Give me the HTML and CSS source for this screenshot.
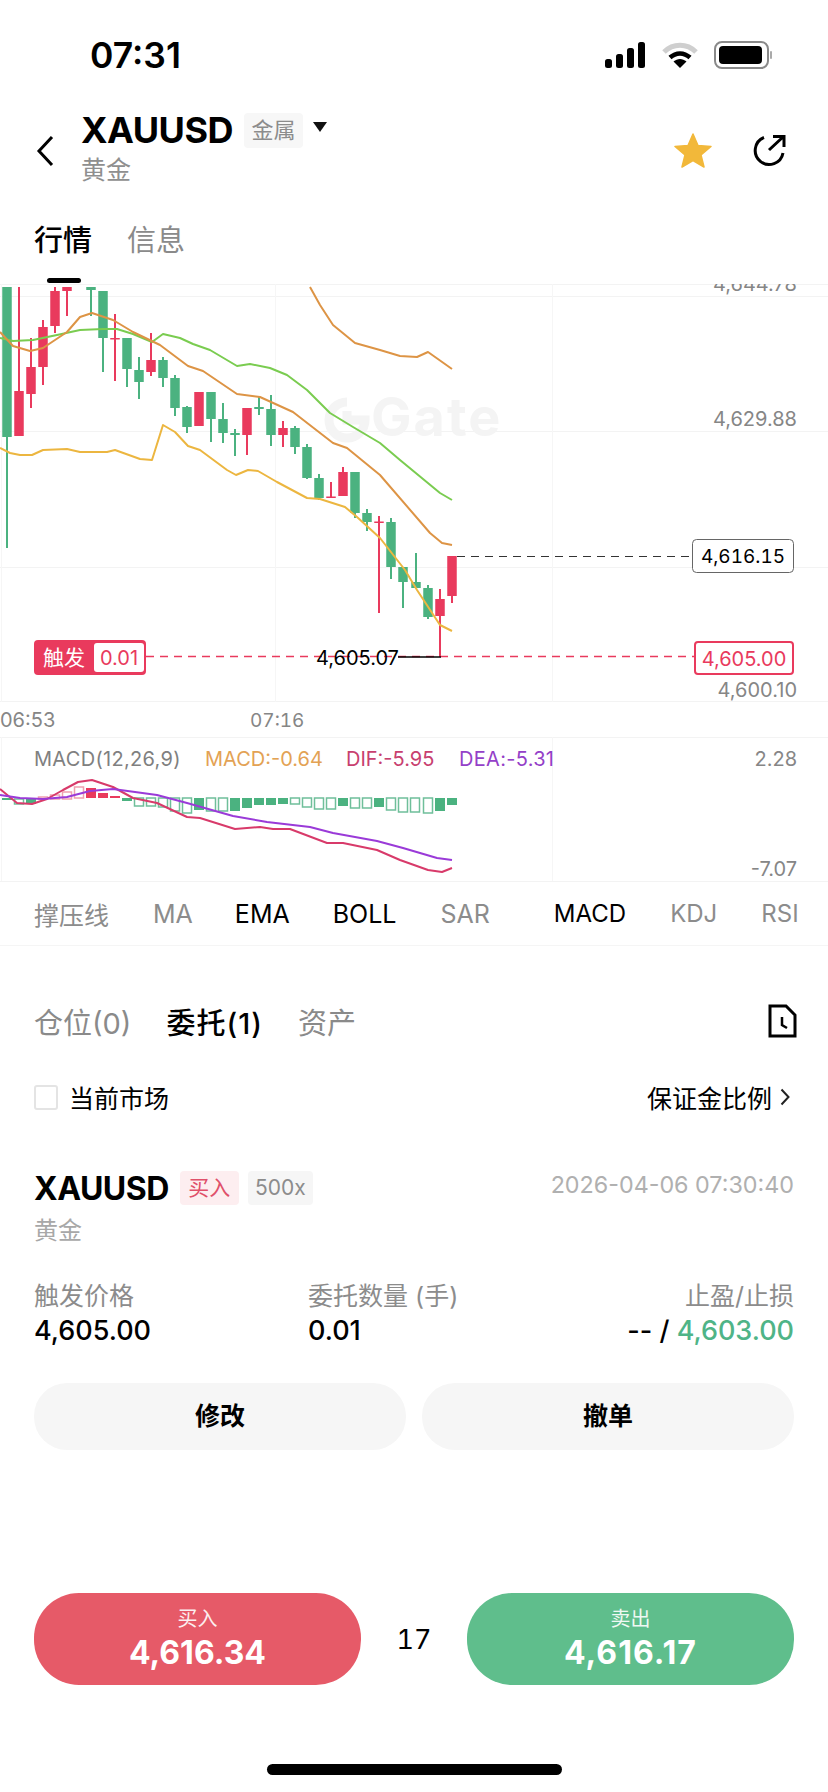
FILE: index.html
```html
<!DOCTYPE html>
<html lang="zh-CN">
<head>
  <meta charset="UTF-8">
  <title>XAUUSD</title>
  <link rel="stylesheet" href="styles.css">
</head>
<body>
  <div class="phone">
    <div class="status">
      <span class="time">07:31</span>
      <div class="status-icons">
        <svg width="41" height="26" viewBox="0 0 41 26"><rect x="0" y="17" width="7" height="9" rx="2.5"/><rect x="11" y="12" width="7" height="14" rx="2.5"/><rect x="22" y="6" width="7" height="20" rx="2.5"/><rect x="33" y="0" width="7" height="26" rx="2.5"/></svg>
        <svg width="36" height="26" viewBox="0 0 36 26"><path d="M2 10C11 1 25 1 34 10" fill="none" stroke="#cfcfcf" stroke-width="5"/><path d="M8 15.5C14 10 22 10 28 15.5" fill="none" stroke="#000" stroke-width="4.5"/><path d="M11.5 19.5C15.5 16 20.500 16 24.500 19.500L18 26Z"/></svg>
        <svg width="59" height="28" viewBox="0 0 59 28"><rect x="1" y="1" width="53" height="26" rx="7" fill="none" stroke="#8a8a8a" stroke-width="2"/><rect x="5" y="5" width="43" height="18" rx="4"/><rect x="56" y="10" width="2" height="8" rx="1" fill="#aaa"/></svg>
      </div>
    </div>

    <div class="top">
      <svg class="back" width="18" height="32" viewBox="0 0 18 32"><path d="M16 2L3 16L16 30" fill="none" stroke="#000" stroke-width="3"/></svg>
      <div class="title">
        <div class="title-row">
          <span class="symbol">XAUUSD</span>
          <span class="kind">金属</span>
          <span class="caret"></span>
        </div>
        <div class="sub">黄金</div>
      </div>
      <div class="top-icons">
        <svg width="38" height="35" viewBox="0 0 38 35"><path d="M19 1L24 12.500L37 13.500L27 22L30 34L19 27.500L8 34L11 22L1 13.500L14 12.500Z" fill="#f2b83a" stroke="#f2b83a" stroke-width="1.500" stroke-linejoin="round"/></svg>
        <svg width="33" height="33" viewBox="0 0 33 33"><path d="M11 3.500A14 14 0 1 0 30 19" fill="none" stroke="#000" stroke-width="3"/><path d="M16 16L30 3M20 2.500H31V13" fill="none" stroke="#000" stroke-width="3"/></svg>
      </div>
    </div>

    <div class="tabs">
      <span class="tab on">行情</span>
      <span class="tab">信息</span>
      <span class="tab-mark"></span>
    </div>

    <svg class="chart" width="828" height="598" viewBox="0 284 828 598">
      <!-- grid -->
      <path d="M0 284.500H828M0 296.500H828M0 431.500H828M0 567.500H828M0 701.500H828M0 737.500H828M0 881.500H828" stroke="#f3f3f3" fill="none"/>
      <path d="M275.500 284V702M552.500 284V702M552.500 737V881M1.500 284V702M1.500 737V881" stroke="#f6f6f6" fill="none"/>

      <!-- watermark -->
      <g class="mark">
        <path d="M347 402A18 18 0 1 0 365 420H347V411" fill="none" stroke="#f4f4f4" stroke-width="9"/>
        <text x="371" y="436">Gate</text>
      </g>

      <!-- candle wicks -->
      <path stroke="#4bb280" stroke-width="2" fill="none" d="M7 287V548M91 287V316M103 338V372M127 369V387M139 357V399M163 357V387M175 375V416M187 406V433M211 419V442M223 403V443M235 429V456M259 397V415M271 395V446M295 426V454M307 444V479M319 474V500M355 513V518M367 509V531M391 518V579M403 582V608M416 553V588M428 585V619"/>
      <path stroke="#e93a5d" stroke-width="2" fill="none" d="M19 287V391M31 338V408M43 320V385M55 287V333M67 287V316M115 314V381M151 333V376M247 435V455M283 421V447M331 482V498M343 467V496M379 516V613M440 589V657M452 596V603"/>
      <!-- candle bodies -->
      <path stroke="#4bb280" stroke-width="9.500" fill="none" d="M7 287V437M91 287V290M103 291V338M127 338V369M139 370V382M163 360V378M175 378V408M187 407V427M211 392V419M223 419V433M235 433V435M259 407V409M271 409V435M295 428V447M307 447V478M319 478V498M355 472V513M367 513V522M391 522V567M403 567V582M416 582V588M428 588V617"/>
      <path stroke="#e93a5d" stroke-width="9.500" fill="none" d="M19 391V436M31 367V394M43 327V367M55 291V326M67 287V291M115 338V339.500M151 360V372M199 392V426M247 408V435M283 428V435M331 496.500V498M343 472V496M379 521.500V523M440 599V616M452 556V596"/>

      <!-- boll lines -->
      <polyline class="ln" stroke="#dd9445" points="310,287 320,305 333,325 355,343 380,350 400,356 417,357 428,352 452,369"/>
      <polyline class="ln" stroke="#7acc50" points="0,338 13,341 33,340 57,335 80,330 103,329 117,329 133,334 152,342 163,334 180,338 193,344 210,350 237,366 250,364 270,368 287,375 307,390 330,413 353,427 380,443 400,460 440,493 452,500"/>
      <polyline class="ln" stroke="#dd9445" points="0,332 13,346 30,351 43,348 67,332 80,317 92,313 113,320 133,332 160,345 188,366 203,371 237,394 260,397 293,412 333,443 347,448 380,475 430,533 442,543 452,545"/>
      <polyline class="ln" stroke="#ecb640" points="0,448 10,453 20,455 32,455 43,450 67,449 80,452 107,452 115,450 140,459 152,460 163,425 175,432 188,446 200,450 227,470 236,475 248,470 258,471 277,482 307,498 320,499 345,507 357,517 380,538 405,570 417,590 440,625 452,631"/>

      <!-- current price -->
      <path d="M457 556.500H692" stroke="#333" stroke-dasharray="8 6" fill="none"/>
      <rect class="tag" x="692.500" y="539.500" width="101" height="33" rx="4"/>
      <text class="tag-num tn" x="743" y="563" text-anchor="middle">4,616.15</text>

      <!-- trigger order line -->
      <path d="M146 656.500H694" stroke="#e93a5d" stroke-width="1.500" stroke-dasharray="8 6" fill="none"/>
      <path d="M398 657H441" stroke="#000" stroke-width="1.500" fill="none"/>
      <text class="low" x="316" y="665">4,605.07</text>
      <rect x="34" y="640" width="112" height="35" rx="4" fill="#e93a5d"/>
      <text class="trig" x="43" y="665">触发</text>
      <rect x="94" y="643" width="50" height="29" rx="3" fill="#fff"/>
      <text class="trig-num" x="119" y="665" text-anchor="middle">0.01</text>
      <rect class="tag-red" x="695" y="642" width="98" height="32" rx="3"/>
      <text class="tag-num red" x="744" y="666" text-anchor="middle">4,605.00</text>

      <!-- price axis -->
      <g class="axis">
        <text x="797" y="291">4,644.78</text>
        <text x="797" y="426">4,629.88</text>
        <text x="797" y="697">4,600.10</text>
        <text x="797" y="766">2.28</text>
        <text x="797" y="876">-7.07</text>
      </g>
      <text class="axis-t" x="0" y="727">06:53</text>
      <text class="axis-t tn" x="250" y="727">07:16</text>

      <!-- macd legend -->
      <text class="leg leg-wide" x="34" y="766" fill="#808080">MACD(12,26,9)</text>
      <text class="leg" x="205" y="766" fill="#e3a254">MACD:-0.64</text>
      <text class="leg" x="346" y="766" fill="#c8406f">DIF:-5.95</text>
      <text class="leg leg-wide" x="459" y="766" fill="#9440c8">DEA:-5.31</text>

      <!-- macd histogram -->
      <path stroke="#4bb280" stroke-width="10" fill="none" d="M7 798V800M31 799V804M127 798V801M199 798V810M235 798V811M247 798V808M259 798V805M271 798V805M283 798V804M343 798V806M379 798V807M440 798V811M452 798V805"/>
      <path stroke="#6fbf9a" stroke-width="1.500" fill="none" d="M14.500 799h9v5h-9zM134.500 798h9v8h-9zM146.500 798h9v8h-9zM158.500 798h9v9h-9zM170.500 798h9v13h-9zM182.500 798h9v15h-9zM206.500 798h9v13h-9zM218.500 798h9v13h-9zM290.500 798h9v6h-9zM302.500 798h9v9h-9zM314.500 798h9v11h-9zM326.500 798h9v11h-9zM350.500 798h9v10h-9zM362.500 798h9v10h-9zM386.500 798h9v12h-9zM398.500 798h9v14h-9zM410.500 798h9v14h-9zM423.500 798h9v15h-9z"/>
      <path stroke="#f0a0b0" stroke-width="1.500" fill="none" d="M38.500 797h9v2h-9zM50.500 795h9v4h-9zM62.500 792h9v7h-9zM74.500 787h9v11h-9z"/>
      <path stroke="#e93a5d" stroke-width="10" fill="none" d="M91 788V798M103 793V798"/>
      <path stroke="#e93a5d" stroke-width="2" fill="none" d="M110 797H120"/>
      <path stroke="#4bb280" stroke-width="2" fill="none" d="M122 799H132"/>

      <!-- macd lines -->
      <polyline class="ln" stroke="#d83a6a" points="0,789 17,803 32,804 47,799 63,790 78,782 92,780 113,787 133,798 157,803 187,817 200,818 235,829 260,827 273,829 290,829 327,843 343,843 377,850 400,860 428,870 442,872 452,868"/>
      <polyline class="ln" stroke="#9a3ad8" points="0,795 20,798 43,799 67,797 90,791 113,789 157,795 187,803 233,816 267,822 310,827 333,833 377,841 403,848 437,858 452,860"/>
    </svg>

    <div class="inds">
      <span class="ind i-a">撑压线</span>
      <span class="ind i-b">MA</span>
      <span class="ind on i-c">EMA</span>
      <span class="ind on i-d">BOLL</span>
      <span class="ind i-e">SAR</span>
      <span class="ind-sep"></span>
      <span class="ind on sm i-f">MACD</span>
      <span class="ind sm i-g">KDJ</span>
      <span class="ind sm">RSI</span>
    </div>

    <div class="subtabs">
      <span class="stab">仓位(0)</span>
      <span class="stab on">委托(1)</span>
      <span class="stab">资产</span>
      <svg class="doc" width="29" height="34" viewBox="0 0 29 34"><path d="M2 2H18L27 11V32H2Z" fill="none" stroke="#000" stroke-width="3"/><path d="M14 13V21L19 24" fill="none" stroke="#000" stroke-width="2.500"/></svg>
    </div>

    <div class="filter">
      <span class="check"></span>
      <span class="filter-txt">当前市场</span>
      <span class="margin">保证金比例</span>
      <svg width="10" height="18" viewBox="0 0 10 18"><path d="M1.500 1.500L8.500 9L1.500 16.500" fill="none" stroke="#222" stroke-width="2"/></svg>
    </div>

    <div class="order">
      <div class="order-head">
        <span class="order-sym">XAUUSD</span>
        <span class="pill buy">买入</span>
        <span class="pill lev">500x</span>
        <span class="order-date">2026-04-06 07:30:40</span>
      </div>
      <div class="order-sub">黄金</div>
      <div class="stats">
        <div class="stat">
          <div class="stat-l">触发价格</div>
          <div class="stat-v">4,605.00</div>
        </div>
        <div class="stat">
          <div class="stat-l">委托数量 (手)</div>
          <div class="stat-v">0.01</div>
        </div>
        <div class="stat right">
          <div class="stat-l">止盈/止损</div>
          <div class="stat-v">-- / <span class="green">4,603.00</span></div>
        </div>
      </div>
      <div class="actions">
        <div class="act">修改</div>
        <div class="act">撤单</div>
      </div>
    </div>

    <div class="trade">
      <div class="bs bs-buy">
        <div class="bs-l">买入</div>
        <div class="bs-p">4,616.34</div>
      </div>
      <div class="spread">17</div>
      <div class="bs bs-sell">
        <div class="bs-l">卖出</div>
        <div class="bs-p">4,616.17</div>
      </div>
    </div>

    <div class="home"></div>
  </div>
</body>
</html>
```

FILE: styles.css
```css
*{
  box-sizing:border-box;
}
body{
  margin:0;
  background:#fff;
  color:#000;
  font-family:Inter,"Noto Sans CJK SC",sans-serif;
}
.phone{
  width:828px;
  height:1792px;
  display:flex;
  flex-direction:column;
  overflow:hidden;
}
svg{
  display:block;
  flex:none;
}

/* status bar */
.status{
  height:110px;
  display:flex;
  align-items:center;
  justify-content:space-between;
  padding:0 55px 0 90px;
}
.time{
  font-size:35.5px;
  font-weight:600;
}
.status-icons{
  display:flex;
  align-items:center;
  gap:16px;
}

/* header */
.top{
  height:80px;
  display:flex;
  align-items:center;
  padding:0 42px 0 36px;
}
.back{
  margin-top:2px;
}
.title{
  margin-left:27px;
}
.title-row{
  display:flex;
  align-items:center;
  height:35px;
}
.symbol{
  font-size:36px;
  font-weight:700;
  letter-spacing:-.5px;
}
.kind{
  margin-left:11px;
  width:59px;
  height:35px;
  line-height:35px;
  text-align:center;
  background:#f7f7f7;
  border-radius:4px;
  color:#8c8c8c;
  font-size:22px;
}
.caret{
  margin-left:10px;
  margin-bottom:6px;
  border-left:7px solid transparent;
  border-right:7px solid transparent;
  border-top:10px solid #111;
}
.sub{
  margin-top:4px;
  font-size:25px;
  line-height:36px;
  color:#8f8f8f;
}
.top-icons{
  margin-left:auto;
  display:flex;
  align-items:center;
  gap:41px;
}

/* tabs */
.tabs{
  position:relative;
  height:94px;
  display:flex;
  gap:35px;
  padding:29px 0 0 34px;
}
.tab{
  font-size:29px;
  line-height:44px;
  color:#8a8a8a;
}
.tab.on{
  color:#000;
  font-weight:500;
}
.tab-mark{
  position:absolute;
  left:47px;
  top:88px;
  width:34px;
  height:5px;
  background:#000;
  border-radius:3px;
}

/* chart */
.ln{
  fill:none;
  stroke-width:2;
  stroke-linejoin:round;
}
.mark text{
  font-size:54px;
  font-weight:700;
  letter-spacing:2px;
  fill:#f4f4f4;
}
.tag{
  fill:#fff;
  stroke:#666;
}
.tag-red{
  fill:#fff;
  stroke:#e93a5d;
  stroke-width:2;
}
.tag-num{
  font-size:20px;
  fill:#000;
}
.tag-num.red{
  fill:#e93a5d;
}
.low{
  font-size:20px;
  fill:#000;
}
.trig{
  font-size:21px;
  fill:#fff;
}
.trig-num{
  font-size:20px;
  fill:#e93a5d;
}
.axis text{
  font-size:20px;
  fill:#868686;
  text-anchor:end;
}
.axis-t{
  font-size:20px;
  fill:#868686;
}
.leg{
  font-size:20px;
}
.leg-wide{
  letter-spacing:.3px;
}
.tn{
  font-size:19px;
  font-feature-settings:"tnum";
}

/* indicator switch */
.inds{
  height:64px;
  display:flex;
  align-items:center;
  padding:0 31px 0 34px;
  border-bottom:1px solid #f5f5f5;
  font-size:25px;
  color:#8c8c8c;
  white-space:nowrap;
}
.ind.on{
  color:#000;
}
.ind.sm{
  font-size:24px;
}
.i-a{ margin-right:44px; }
.i-b{ margin-right:42px; }
.i-c{ margin-right:43px; }
.i-d{ margin-right:44px; }
.i-e{ margin-right:31px; }
.ind-sep{
  width:1px;
  height:26px;
  background:#ececec;
  margin-right:33px;
}
.i-f{ margin-right:44px; }
.i-g{ margin-right:44px; }

/* position tabs */
.subtabs{
  height:110px;
  display:flex;
  align-items:center;
  gap:35px;
  padding:40px 31px 0 34px;
  font-size:29px;
  color:#8a8a8a;
}
.stab.on{
  color:#000;
  font-weight:500;
  letter-spacing:1px;
}
.doc{
  margin-left:auto;
}
.filter{
  height:42px;
  margin-top:20px;
  display:flex;
  align-items:center;
  padding:0 38px 0 34px;
  font-size:25px;
}
.check{
  width:24px;
  height:25px;
  border:2px solid #e4e4e4;
  border-radius:3px;
}
.filter-txt{
  margin-left:11px;
}
.margin{
  margin-left:auto;
  margin-right:8px;
}

/* order card */
.order{
  padding:0 34px;
}
.order-head{
  height:36px;
  margin-top:52px;
  display:flex;
  align-items:center;
}
.order-sym{
  font-size:32px;
  font-weight:700;
  letter-spacing:-.5px;
}
.pill{
  height:34px;
  line-height:34px;
  text-align:center;
  border-radius:4px;
  font-size:21px;
}
.buy{
  margin-left:11px;
  width:59px;
  background:#fdeef0;
  color:#e0506a;
}
.lev{
  margin-left:9px;
  width:65px;
  background:#f6f6f6;
  color:#8c8c8c;
}
.order-date{
  margin-left:auto;
  margin-bottom:8px;
  font-size:23.3px;
  color:#b0b0b0;
}
.order-sub{
  margin-top:7px;
  font-size:24px;
  line-height:36px;
  color:#a8a8a8;
}
.stats{
  margin-top:29px;
  display:grid;
  grid-template-columns:274px 1fr 1fr;
}
.stat-l{
  font-size:25px;
  line-height:36px;
  color:#8c8c8c;
}
.stat-v{
  font-size:27px;
  line-height:34px;
  font-weight:500;
}
.right{
  text-align:right;
}
.green{
  color:#4fb487;
}
.actions{
  margin-top:35px;
  display:flex;
  gap:16px;
}
.act{
  flex:1;
  height:67px;
  line-height:67px;
  text-align:center;
  background:#f6f6f6;
  border-radius:33px;
  font-size:25px;
  font-weight:700;
}

/* buy / sell */
.trade{
  margin-top:143px;
  padding:0 34px;
  display:flex;
  align-items:center;
}
.bs{
  width:327px;
  height:92px;
  border-radius:45px;
  color:#fff;
  text-align:center;
  padding-top:12px;
}
.bs-buy{
  background:#e65a68;
}
.bs-sell{
  background:#5fbe8c;
}
.bs-sell .bs-p{
  letter-spacing:1px;
}
.bs-l{
  font-size:20px;
  line-height:28px;
  opacity:.9;
}
.bs-p{
  font-size:32px;
  line-height:39px;
  font-weight:700;
}
.spread{
  flex:1;
  text-align:center;
  font-size:27px;
  font-feature-settings:"tnum";
}
.home{
  width:295px;
  height:11px;
  margin:79px auto 0;
  background:#000;
  border-radius:6px;
}
```
